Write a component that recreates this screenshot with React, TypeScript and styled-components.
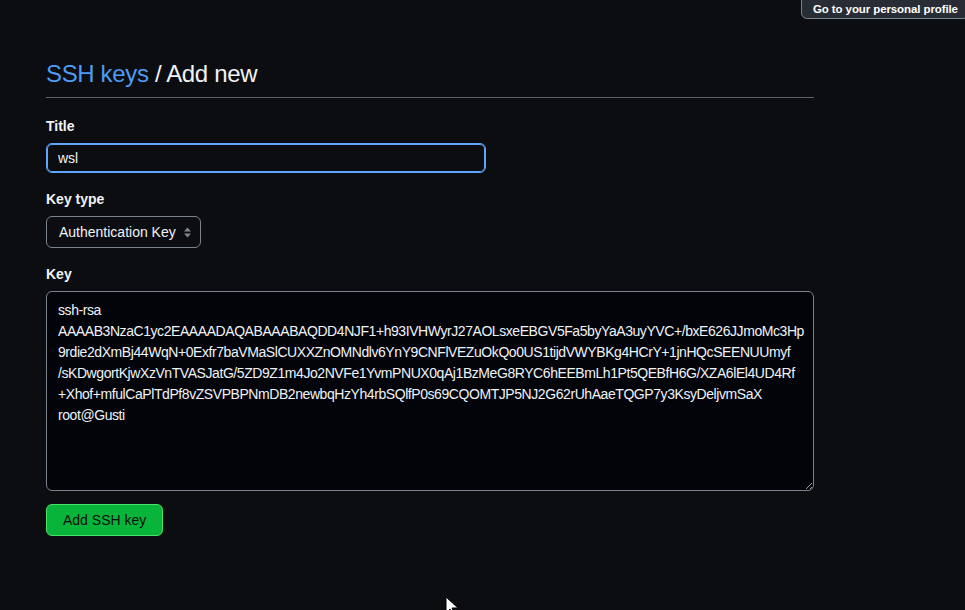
import React, { useState } from 'react';
import styled, { createGlobalStyle } from 'styled-components';

const KEY_LINES = [
  'ssh-rsa',
  'AAAAB3NzaC1yc2EAAAADAQABAAABAQDD4NJF1+h93IVHWyrJ27AOLsxeEBGV5Fa5byYaA3uyYVC+/bxE626JJmoMc3Hp',
  '9rdie2dXmBj44WqN+0Exfr7baVMaSlCUXXZnOMNdlv6YnY9CNFlVEZuOkQo0US1tijdVWYBKg4HCrY+1jnHQcSEENUUmyf',
  '/sKDwgortKjwXzVnTVASJatG/5ZD9Z1m4Jo2NVFe1YvmPNUX0qAj1BzMeG8RYC6hEEBmLh1Pt5QEBfH6G/XZA6lEl4UD4Rf',
  '+Xhof+mfulCaPlTdPf8vZSVPBPNmDB2newbqHzYh4rbSQlfP0s69CQOMTJP5NJ2G62rUhAaeTQGP7y3KsyDeljvmSaX',
  'root@Gusti',
];

const GlobalStyle = createGlobalStyle`
  html, body {
    margin: 0;
    background: #0c0d11;
    color: #f0f3f6;
    font-family: "Liberation Sans", Arial, sans-serif;
    color-scheme: dark;
  }
  * { box-sizing: border-box; }
`;

const App = () => {
  const [title, setTitle] = useState('wsl');
  const [keyType, setKeyType] = useState('auth');
  const [key, setKey] = useState(KEY_LINES.join('\n'));

  return (
    <Page>
      <GlobalStyle />
      <Tooltip>Go to your personal profile</Tooltip>

      <Main>
        <Subhead>
          <Crumb href="#">SSH keys</Crumb> / Add new
        </Subhead>

        <Group>
          <Label htmlFor="ssh-title">Title</Label>
          <TextInput id="ssh-title" value={title} onChange={(e) => setTitle(e.target.value)} />
        </Group>

        <Group>
          <Label htmlFor="ssh-type">Key type</Label>
          <SelectWrap>
            <Select id="ssh-type" value={keyType} onChange={(e) => setKeyType(e.target.value)}>
              <option value="auth">Authentication Key</option>
              <option value="signing">Signing Key</option>
            </Select>
            <SelectArrows width="9" height="13" viewBox="0 0 9 13">
              <path d="M4.5 1.5 8 5.5H1z" fill="#7d8590" />
              <path d="M4.5 11.5 1 7.5h7z" fill="#7d8590" />
            </SelectArrows>
          </SelectWrap>
        </Group>

        <Group>
          <Label htmlFor="ssh-key">Key</Label>
          <KeyArea id="ssh-key" value={key} onChange={(e) => setKey(e.target.value)} spellCheck={false} />
        </Group>

        <PrimaryButton type="button">Add SSH key</PrimaryButton>
      </Main>

      <Cursor width="14" height="20" viewBox="0 0 14 20">
        <path d="M1 1v16l4-4 3 6 2-1-3-6h6z" fill="#fff" stroke="#000" strokeWidth="1" />
      </Cursor>
    </Page>
  );
};

export default App;

const Page = styled.div`
  position: relative;
  width: 965px;
  height: 610px;
  overflow: hidden;
`;

const Tooltip = styled.div`
  position: absolute;
  top: -10px;
  left: 801px;
  padding: 12px 10px 3px 11px;
  background: #272c35;
  border: 1px solid #7a828e;
  border-radius: 6px;
  font-size: 11.5px;
  font-weight: 700;
  letter-spacing: -0.1px;
  color: #ffffff;
  white-space: nowrap;
`;

const Main = styled.div`
  width: 814px;
  padding: 59px 0 0 46px;
`;

const Subhead = styled.h2`
  margin: 0 0 18px;
  padding-bottom: 8px;
  border-bottom: 1px solid #5b626b;
  font-size: 24px;
  font-weight: 400;
  letter-spacing: -0.35px;
  line-height: 30px;
  color: #f0f3f6;
`;

const Crumb = styled.a`
  color: #4c9cf5;
  text-decoration: none;
`;

const Group = styled.div`
  display: flex;
  flex-direction: column;
  align-items: flex-start;
  margin-bottom: 16px;
`;

const Label = styled.label`
  display: block;
  margin-bottom: 6px;
  font-size: 14px;
  font-weight: 700;
  line-height: 21px;
  color: #f0f3f6;
`;

const TextInput = styled.input`
  width: 440px;
  height: 30px;
  padding: 0 11px;
  background: #0c0d11;
  border: 1px solid #5ea6ff;
  box-shadow: inset 0 0 0 1px #5ea6ff;
  border-radius: 6px;
  outline: none;
  font-family: inherit;
  font-size: 14px;
  color: #f0f3f6;
`;

const SelectWrap = styled.div`
  position: relative;
`;

const Select = styled.select`
  appearance: none;
  width: 155px;
  height: 32px;
  padding: 0 24px 0 12px;
  background: #0c0d11;
  border: 1px solid #7a828e;
  border-radius: 6px;
  font-family: inherit;
  font-size: 14px;
  color: #f0f3f6;
  outline: none;
`;

const SelectArrows = styled.svg`
  position: absolute;
  right: 9px;
  top: 10px;
  pointer-events: none;
`;

const KeyArea = styled.textarea`
  width: 768px;
  height: 200px;
  padding: 8px 11px;
  background: #02040a;
  border: 1px solid #7a828e;
  border-radius: 6px;
  outline: none;
  font-family: inherit;
  font-size: 14px;
  letter-spacing: -0.43px;
  line-height: 21px;
  color: #f0f3f6;
  white-space: pre;
  overflow: hidden;
  resize: vertical;
`;

const PrimaryButton = styled.button`
  margin-top: -3px;
  height: 32px;
  padding: 0 16px;
  background: #09b43a;
  border: 1px solid #4ae168;
  border-radius: 6px;
  font-family: inherit;
  font-size: 14px;
  font-weight: 500;
  color: #09100b;
  cursor: pointer;
`;

const Cursor = styled.svg`
  position: absolute;
  left: 445px;
  top: 596px;
`;
